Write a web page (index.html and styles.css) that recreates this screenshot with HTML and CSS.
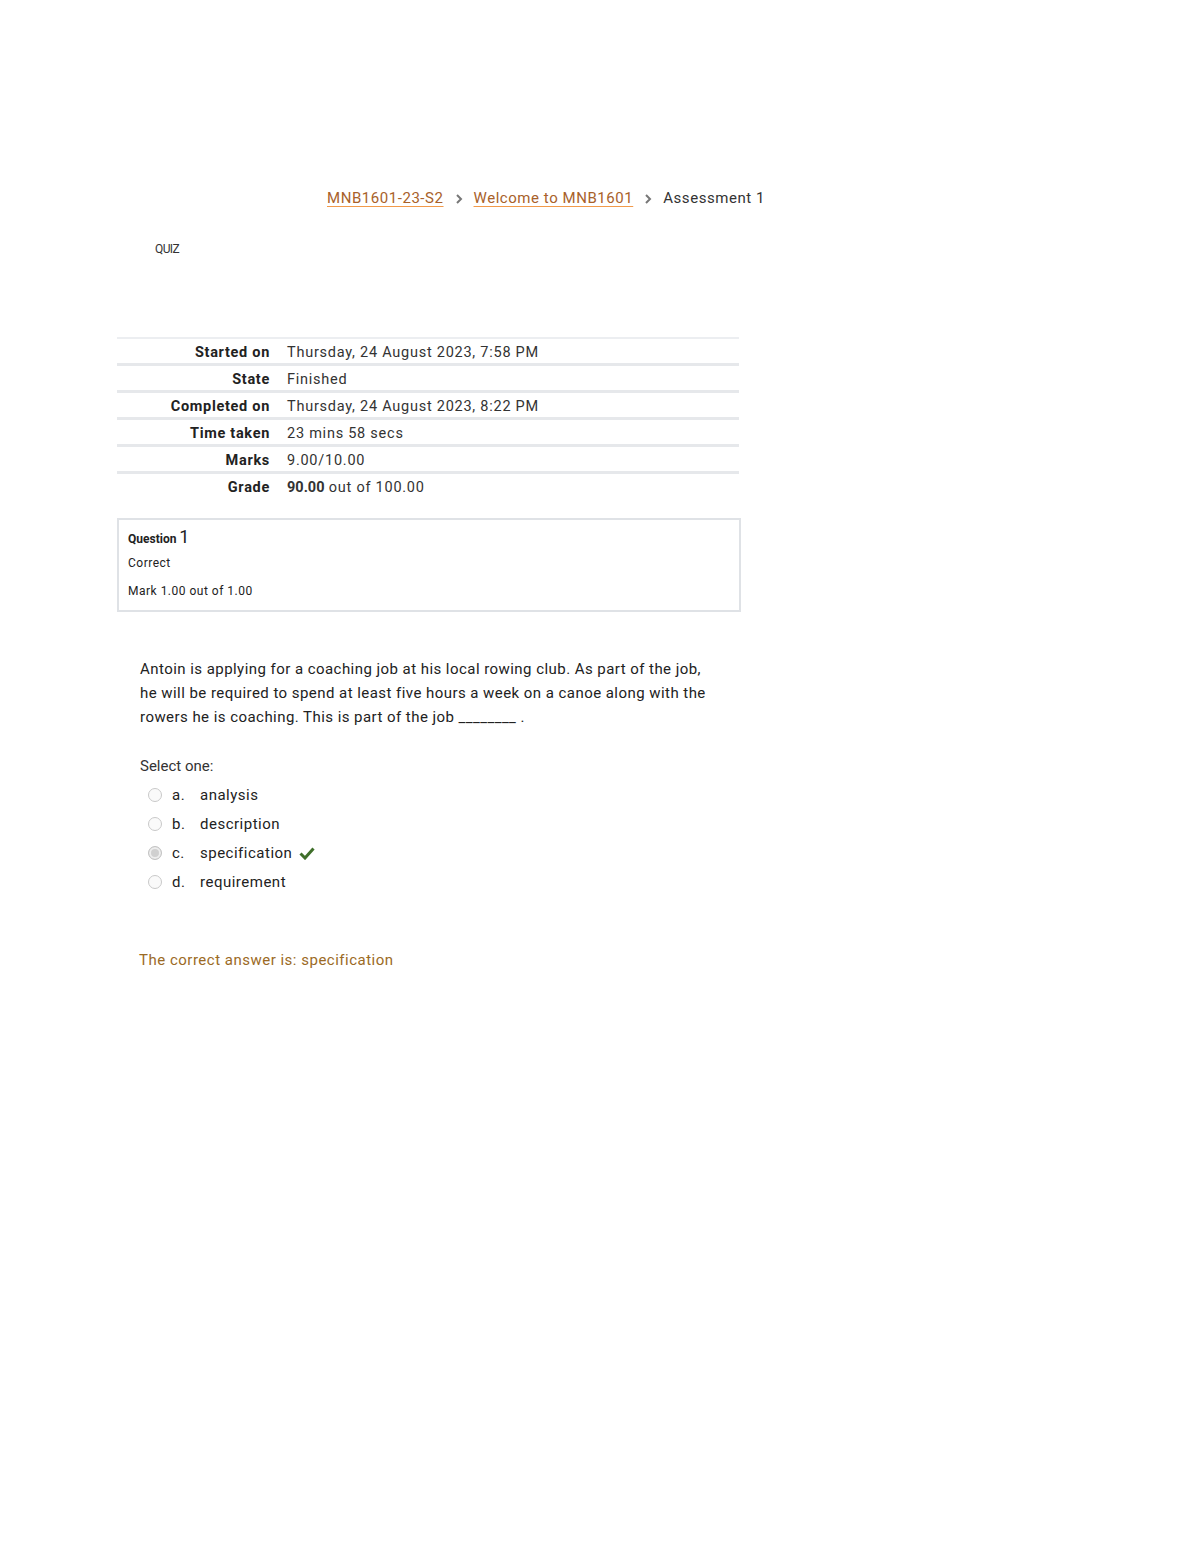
FILE: index.html
```html
<!DOCTYPE html>
<html>
<head>
<meta charset="utf-8">
<link rel="stylesheet" href="styles.css">
</head>
<body>
<div class="page">
  <nav class="crumbs">
    <a class="crumb-link">MNB1601-23-S2</a>
    <svg class="chev" viewBox="0 0 10 12" width="10" height="12"><path d="M3 2 L7 6 L3 10" fill="none" stroke="#777" stroke-width="2"/></svg>
    <a class="crumb-link">Welcome to MNB1601</a>
    <svg class="chev" viewBox="0 0 10 12" width="10" height="12"><path d="M3 2 L7 6 L3 10" fill="none" stroke="#777" stroke-width="2"/></svg>
    <span class="crumb-current">Assessment 1</span>
  </nav>

  <div class="quiz-label">QUIZ</div>

  <table class="summary">
    <tr><th>Started on</th><td>Thursday, 24 August 2023, 7:58 PM</td></tr>
    <tr><th>State</th><td>Finished</td></tr>
    <tr><th>Completed on</th><td>Thursday, 24 August 2023, 8:22 PM</td></tr>
    <tr><th>Time taken</th><td>23 mins 58 secs</td></tr>
    <tr><th>Marks</th><td>9.00/10.00</td></tr>
    <tr><th>Grade</th><td><b>90.00</b> out of 100.00</td></tr>
  </table>

  <div class="qinfo">
    <div class="qno">Question <span class="num">1</span></div>
    <div class="qstate">Correct</div>
    <div class="qgrade">Mark 1.00 out of 1.00</div>
  </div>

  <div class="qtext">Antoin is applying for a coaching job at his local rowing club. As part of the job, he will be required to spend at least five hours a week on a canoe along with the rowers he is coaching. This is part of the job ________ .</div>

  <div class="prompt">Select one:</div>
  <div class="answers">
    <div class="opt"><span class="radio"></span><span class="letter">a.</span><span>analysis</span></div>
    <div class="opt"><span class="radio"></span><span class="letter">b.</span><span>description</span></div>
    <div class="opt"><span class="radio checked"></span><span class="letter">c.</span><span>specification</span>
      <svg class="tick" viewBox="0 0 16 14" width="16" height="14"><path d="M1.5 7.5 L6 12 L14.5 2.5" fill="none" stroke="#3f6f2a" stroke-width="3"/></svg></div>
    <div class="opt"><span class="radio"></span><span class="letter">d.</span><span>requirement</span></div>
  </div>

  <div class="rightanswer">The correct answer is: specification</div>
</div>
</body>
</html>
```
FILE: styles.css
```css
html, body { margin: 0; padding: 0; background: #fff; }
body {
  font-family: Roboto, "Liberation Sans", sans-serif;
  color: #222;
  width: 1200px;
  height: 1553px;
}
.page { padding-top: 186px; }

.crumbs {
  display: flex;
  align-items: center;
  justify-content: center;
  gap: 10px;
  font-size: 15px;
  letter-spacing: 0.55px;
  height: 24px;
  padding-left: 92px;
  box-sizing: border-box;
  width: 1000px;
}
.crumb-link {
  color: #a8612a;
  text-decoration: underline;
  text-decoration-color: #f29a4a;
  text-underline-offset: 3px;
}
.chev { margin-top: 1px; }
.crumb-current { color: #333; }

.quiz-label {
  margin: 32px 0 0 155px;
  font-size: 12px;
  letter-spacing: -0.6px;
  color: #333;
  height: 16px;
}

.summary {
  margin: 79px 0 0 117px;
  width: 622px;
  border-collapse: collapse;
  font-size: 14.5px;
  border-top: 2px solid #eceef1;
}
.summary th, .summary td {
  border-bottom: 3px solid #e6e8eb;
  padding: 3px 0 0 0;
  line-height: 21px;
}
.summary th {
  width: 153px;
  text-align: right;
  font-weight: 700;
  letter-spacing: 0.7px;
  padding-right: 17px;
  color: #222;
}
.summary td { letter-spacing: 0.75px; color: #333; }
.summary tr:last-child th, .summary tr:last-child td { border-bottom: none; }
.summary td b { font-weight: 700; letter-spacing: 0px; }

.qinfo {
  margin: 20px 0 0 117px;
  width: 602px;
  border: 2px solid #dfe2e6;
  padding: 6px 9px 9px 9px;
  font-size: 12px;
  letter-spacing: 0.5px;
  color: #222;
}
.qno { font-weight: 700; letter-spacing: 0px; height: 20px; line-height: 22px; }
.qno .num { font-size: 18px; font-weight: 400; }
.qstate { margin-top: 7px; height: 20px; line-height: 20px; }
.qgrade { margin-top: 8px; height: 20px; line-height: 20px; }

.qtext {
  margin: 45px 0 0 140px;
  width: 576px;
  font-size: 15px;
  line-height: 24px;
  letter-spacing: 0.45px;
  color: #222;
}

.prompt {
  margin: 27px 0 0 140px;
  font-size: 15px;
  line-height: 20px;
  color: #333;
}
.answers { margin: 4px 0 0 148px; }
.opt {
  display: flex;
  align-items: center;
  height: 29px;
  font-size: 15px;
  letter-spacing: 0.5px;
  color: #222;
}
.radio {
  width: 12px;
  height: 12px;
  border: 1px solid #c9c9c9;
  border-radius: 50%;
  margin-right: 10px;
  background: #fafafa;
}
.radio.checked { background: #d0d0d0; border-color: #c4c4c4; box-shadow: inset 0 0 0 2px #eee; }
.letter { width: 28px; }
.tick { margin-left: 7px; }

.rightanswer {
  margin: 55px 0 0 139px;
  font-size: 15px;
  letter-spacing: 0.5px;
  color: #9b6a25;
}
```
